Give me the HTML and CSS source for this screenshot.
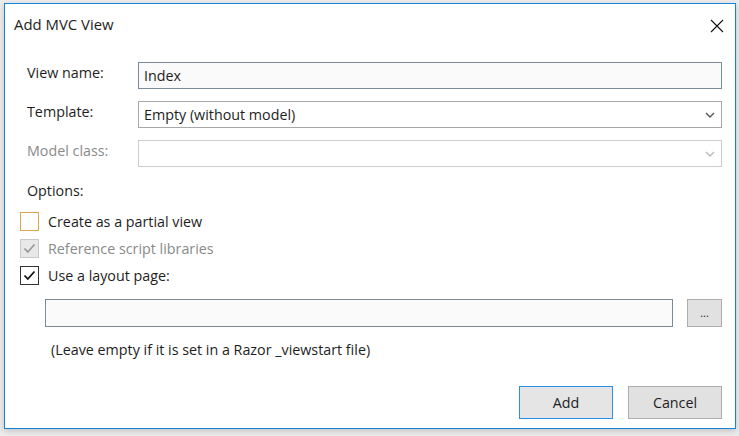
FILE: index.html
```html
<!DOCTYPE html>
<html>
<head>
<meta charset="utf-8">
<link rel="stylesheet" href="styles.css">
</head>
<body>
<div class="dialog">
  <div class="titlebar">
    <span class="title">Add MVC View</span>
    <span class="close"><svg width="14" height="14" viewBox="0 0 14 14"><path d="M1 1 L13 13 M13 1 L1 13" stroke="#111" stroke-width="1.1" fill="none"/></svg></span>
  </div>
  <div class="body">
    <div class="row">
      <label class="lbl">View name:</label>
      <div class="field text">Index</div>
    </div>
    <div class="row">
      <label class="lbl">Template:</label>
      <div class="field select">Empty (without model)<svg class="chev" width="10" height="6" viewBox="0 0 10 6"><path d="M1 1 L5 5 L9 1" stroke="#555" stroke-width="1.4" fill="none"/></svg></div>
    </div>
    <div class="row">
      <label class="lbl disabled">Model class:</label>
      <div class="field select off"><svg class="chev" width="10" height="6" viewBox="0 0 10 6"><path d="M1 1 L5 5 L9 1" stroke="#bbb" stroke-width="1.4" fill="none"/></svg></div>
    </div>
    <div class="options">Options:</div>
    <div class="checks">
      <div class="check"><span class="box focus"></span><span>Create as a partial view</span></div>
      <div class="check disabled"><span class="box dis"><svg width="13" height="11" viewBox="0 0 13 11"><path d="M1.5 5.5 L4.8 9 L11.5 1.5" stroke="#9a9a9a" stroke-width="1.8" fill="none"/></svg></span><span>Reference script libraries</span></div>
      <div class="check"><span class="box on"><svg width="13" height="11" viewBox="0 0 13 11"><path d="M1.5 5.5 L4.8 9 L11.5 1.5" stroke="#111" stroke-width="1.8" fill="none"/></svg></span><span>Use a layout page:</span></div>
    </div>
    <div class="layoutrow">
      <div class="field layoutfield"></div>
      <button class="btn browse">...</button>
    </div>
    <div class="note">(Leave empty if it is set in a Razor _viewstart file)</div>
    <div class="buttons">
      <button class="btn primary">Add</button>
      <button class="btn">Cancel</button>
    </div>
  </div>
</div>
</body>
</html>
```

FILE: styles.css
```css
html, body {
  margin: 0;
  padding: 0;
}
body {
  background: #ececec;
  padding: 3px 3px 7px 4px;
  height: 436px;
  box-sizing: border-box;
  font-family: "Open Sans", "Noto Sans", sans-serif;
  color: #1e1e1e;
}
.dialog {
  width: 732px;
  height: 426px;
  box-sizing: border-box;
  border: 1px solid #1883d7;
  background: #fff;
  display: flex;
  flex-direction: column;
  box-shadow: 0 2px 6px rgba(0,0,0,0.18);
}
.titlebar {
  height: 38px;
  display: flex;
  align-items: center;
  justify-content: space-between;
  padding: 0 11px 0 9px;
}
.title {
  font-size: 14.9px;
  padding-top: 1px;
}
.close {
  display: flex;
  width: 14px;
  height: 14px;
  margin-top: 6px;
}
.body {
  padding: 20px 13px 0 22px;
  display: flex;
  flex-direction: column;
  flex: 1;
}
.row {
  display: flex;
  align-items: flex-start;
  margin-bottom: 12px;
  height: 27px;
}
.lbl {
  width: 111px;
  font-size: 14.3px;
  line-height: 20px;
  padding-top: 1px;
}
.disabled {
  color: #8a8a8a;
}
.field {
  flex: 1;
  height: 27px;
  box-sizing: border-box;
  border: 1px solid #7a8a99;
  background: #fafafa;
  font-size: 14.3px;
  line-height: 25px;
  padding-left: 5px;
  position: relative;
}
.select {
  border-color: #a9a9a9;
  background: #fff;
}
.select.off {
  border-color: #cccccc;
}
.chev {
  position: absolute;
  right: 6px;
  top: 10px;
}
.options {
  font-size: 14.3px;
  line-height: 20px;
  margin-top: 2px;
}
.checks {
  margin-left: -7px;
  margin-top: 11px;
  display: flex;
  flex-direction: column;
  gap: 8px;
}
.check {
  display: flex;
  align-items: center;
  font-size: 14.3px;
  height: 19px;
}
.box {
  width: 19px;
  height: 19px;
  box-sizing: border-box;
  border: 1px solid #333;
  margin-right: 9px;
  display: flex;
  align-items: center;
  justify-content: center;
  background: #fff;
}
.box.focus {
  border-color: #dba654;
}
.box.dis {
  border-color: #c8c8c8;
  background: #e8e8e8;
}
.layoutrow {
  display: flex;
  margin-top: 14px;
  margin-left: 18px;
  gap: 14px;
}
.layoutfield {
  height: 28px;
}
.btn {
  font-family: inherit;
  font-size: 14.3px;
  color: #1e1e1e;
  background: #e1e1e1;
  border: 1px solid #adadad;
  padding: 0;
  width: 94px;
  height: 33px;
}
.browse {
  width: 35px;
  height: 28px;
  font-size: 11px;
  line-height: 20px;
}
.note {
  font-size: 14.3px;
  margin-left: 24px;
  margin-top: 14px;
  line-height: 18px;
}
.buttons {
  display: flex;
  justify-content: flex-end;
  gap: 15px;
  margin-top: 27px;
}
.btn.primary {
  border-color: #2b8fe6;
  background: #e5e5e5;
}
```
